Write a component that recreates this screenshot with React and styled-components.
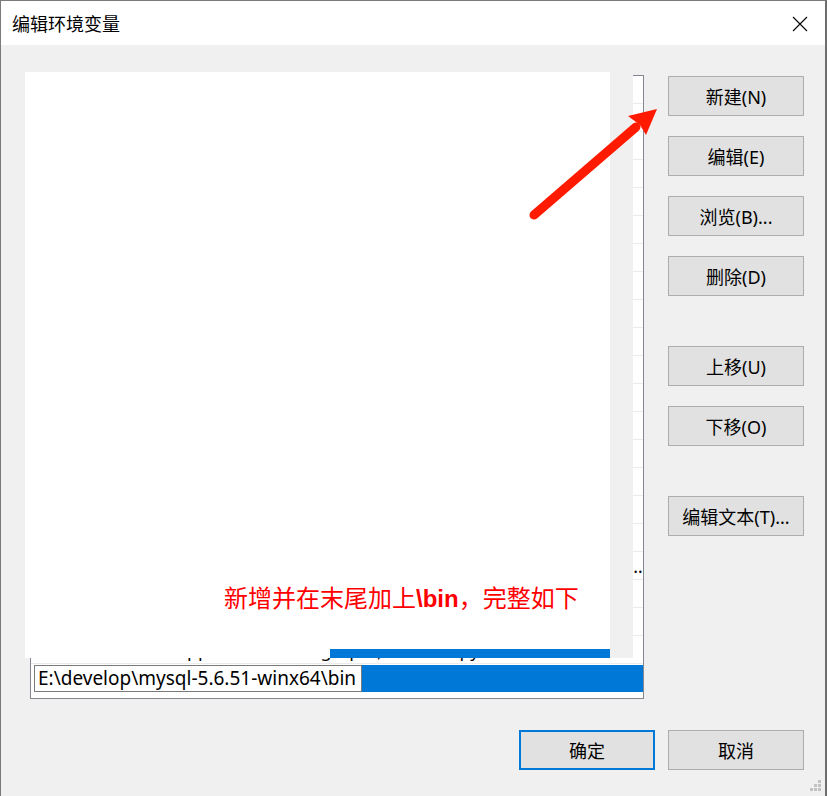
import React from "react";
import styled, { createGlobalStyle } from "styled-components";

const GlobalStyle = createGlobalStyle`
  html, body {
    margin: 0;
    padding: 0;
    background: #f0f0f0;
  }
  * {
    box-sizing: border-box;
  }
`;

const rows = [
  "%SystemRoot%\\system32",
  "%SystemRoot%",
  "%SystemRoot%\\System32\\Wbem",
  "%SYSTEMROOT%\\System32\\WindowsPowerShell\\v1.0\\",
  "%SYSTEMROOT%\\System32\\OpenSSH\\",
  "C:\\Program Files\\Git\\cmd",
  "%JAVA_HOME%\\bin",
  "%JAVA_HOME%\\jre\\bin",
  "C:\\Program Files\\nodejs\\",
  "%MAVEN_HOME%\\bin",
  "C:\\Program Files\\dotnet\\",
  "D:\\Python39\\Scripts\\",
  "D:\\Python39\\",
  "C:\\Program Files\\Docker\\Docker\\resources\\bin",
  "C:\\ProgramData\\DockerDesktop\\version-bin",
  "%GRADLE_HOME%\\bin",
  "C:\\Program Files\\Microsoft SQL Server\\130\\Tools\\Binn\\",
  "C:\\Program Files (x86)\\Microsoft SQL Server\\150\\DTS\\Binn\\ManagementStudio\\Extensions\\Application",
  "D:\\Go\\bin",
  "E:\\develop\\apache-tomcat-8.5.69\\bin",
  "C:\\Users\\Admin\\AppData\\Roaming\\npm;C:\\Users\\py",
];

const sideButtons = [
  { label: "新建(N)" },
  { label: "编辑(E)" },
  { label: "浏览(B)..." },
  { label: "删除(D)" },
  { label: "上移(U)", gap: 50 },
  { label: "下移(O)" },
  { label: "编辑文本(T)...", gap: 50 },
];

const App = () => {
  return (
    <>
      <GlobalStyle />
      <Window>
        <TitleBar>
          <Title>编辑环境变量</Title>
          <CloseIcon width="16" height="16" viewBox="0 0 16 16">
            <path d="M1 1 L15 15 M15 1 L1 15" stroke="#000" strokeWidth="1.1" fill="none" />
          </CloseIcon>
        </TitleBar>
        <Body>
          <Main>
            <ListBox>
              {rows.map((r, i) => (
                <Row key={i}>{r}</Row>
              ))}
              <EditRow>
                <EditInput>E:\develop\mysql-5.6.51-winx64\bin</EditInput>
                <Selection />
              </EditRow>
            </ListBox>
            <SideButtons>
              {sideButtons.map((b) => (
                <Btn key={b.label} $gap={b.gap}>
                  {b.label}
                </Btn>
              ))}
            </SideButtons>
          </Main>
          <Footer>
            <Btn $primary>确定</Btn>
            <Btn>取消</Btn>
          </Footer>
          <Grip width="12" height="12" viewBox="0 0 12 12">
            <rect x="8" y="0" width="3" height="3" fill="#c2c2c2" />
            <rect x="4" y="4" width="3" height="3" fill="#c2c2c2" />
            <rect x="8" y="4" width="3" height="3" fill="#c2c2c2" />
            <rect x="0" y="8" width="3" height="3" fill="#c2c2c2" />
            <rect x="4" y="8" width="3" height="3" fill="#c2c2c2" />
            <rect x="8" y="8" width="3" height="3" fill="#c2c2c2" />
          </Grip>
        </Body>

        {/* 붙여넣은 캡처 이미지 영역 */}
        <Overlay>
          <Paper>
            <Note>
              新增并在末尾加上<b>\bin</b>，完整如下
            </Note>
            <BlueBar />
          </Paper>
          <Strip />
        </Overlay>

        <Arrow width="140" height="125" viewBox="525 102 140 125">
          <line x1="534" y1="215" x2="636" y2="127" stroke="#ff1a00" strokeWidth="9" strokeLinecap="round" />
          <polygon points="657,109 646,135 640,125 628,116" fill="#ff1a00" />
        </Arrow>
      </Window>
    </>
  );
};

export default App;

const Window = styled.div`
  position: relative;
  width: 827px;
  height: 796px;
  border-left: 1px solid #7a7a7a;
  border-top: 1px solid #7a7a7a;
  border-right: 2px solid #6e6e6e;
  background: #f0f0f0;
  font-family: "Noto Sans", "Noto Sans CJK SC", sans-serif;
  color: #000;
  overflow: hidden;
`;

const TitleBar = styled.div`
  height: 44px;
  background: #fff;
  display: flex;
  align-items: center;
  justify-content: space-between;
  padding: 0 17px 0 11px;
`;

const Title = styled.div`
  font-family: "Noto Sans CJK SC", sans-serif;
  font-size: 18px;
  line-height: 24px;
`;

const CloseIcon = styled.svg`
  display: block;
  margin-top: 1px;
`;

const Body = styled.div`
  position: relative;
  height: 750px;
  padding: 30px 21px 0 29px;
`;

const Main = styled.div`
  display: flex;
  gap: 24px;
`;

const ListBox = styled.div`
  width: 614px;
  height: 624px;
  border: 1px solid #828790;
  background: #fff;
  overflow: hidden;
`;

const Row = styled.div`
  height: 28px;
  line-height: 26px;
  padding: 1px 0 0 5px;
  font-size: 18px;
  border-bottom: 1px solid #ebebeb;
  white-space: nowrap;
  overflow: hidden;
  text-overflow: ellipsis;
`;

const EditRow = styled.div`
  display: flex;
  align-items: center;
  height: 28px;
  padding-left: 3px;
`;

const EditInput = styled.div`
  width: 328px;
  height: 27px;
  border: 1px solid #7a7a7a;
  font-size: 19px;
  line-height: 24px;
  padding-left: 3px;
  white-space: nowrap;
  background: #fff;
`;

const Selection = styled.div`
  flex: 1;
  height: 27px;
  background: #0078d7;
`;

const SideButtons = styled.div`
  display: flex;
  flex-direction: column;
  gap: 20px;
  margin-top: 1px;
`;

const Btn = styled.div`
  width: 136px;
  height: 40px;
  display: flex;
  align-items: center;
  justify-content: center;
  background: #e1e1e1;
  border: ${(p) => (p.$primary ? "2px solid #0078d7" : "1px solid #adadad")};
  font-family: "Noto Sans", "Noto Sans CJK SC", sans-serif;
  font-size: 18px;
  margin-top: ${(p) => (p.$gap ? `${p.$gap - 20}px` : "0")};
`;

const Footer = styled.div`
  display: flex;
  justify-content: flex-end;
  gap: 13px;
  margin-top: 31px;
`;

const Grip = styled.svg`
  position: absolute;
  right: 3px;
  bottom: 3px;
`;

const Overlay = styled.div`
  position: absolute;
  left: 24px;
  top: 71px;
  width: 608px;
  height: 586px;
  display: flex;
`;

const Paper = styled.div`
  flex: 1;
  background: #fff;
  display: flex;
  flex-direction: column;
  justify-content: flex-end;
`;

const Note = styled.div`
  margin-left: 199px;
  margin-bottom: 37px;
  color: #ff0000;
  font-family: "Liberation Serif", "Noto Sans CJK SC", serif;
  font-size: 24px;
  line-height: 26px;
  white-space: nowrap;

  b {
    font-family: "Liberation Sans", sans-serif;
    font-weight: bold;
  }
`;

const BlueBar = styled.div`
  height: 9px;
  margin-left: 305px;
  background: #0078d7;
`;

const Strip = styled.div`
  width: 23px;
  background: #f0f0f0;
`;

const Arrow = styled.svg`
  position: absolute;
  left: 524px;
  top: 101px;
  overflow: visible;
`;
